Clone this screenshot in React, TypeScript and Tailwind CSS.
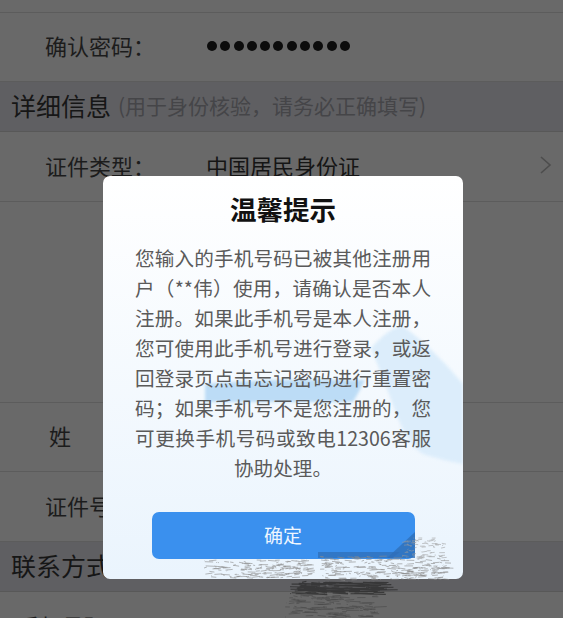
import React from 'react';

const font = { fontFamily: '"Noto Sans CJK SC", "Liberation Sans", sans-serif' };

const bodyLines = [
  '您输入的手机号码已被其他注册用',
  '户（**伟）使用，请确认是否本人',
  '注册。如果此手机号是本人注册，',
  '您可使用此手机号进行登录，或返',
  '回登录页点击忘记密码进行重置密',
  '码；如果手机号不是您注册的，您',
  '可更换手机号码或致电12306客服',
];

function Row({ label, value, height, indent = 'pl-[45px]', chevron, align = 'items-center pb-[3px]' }: { label: string; value?: React.ReactNode; height: string; indent?: string; chevron?: boolean; align?: string }) {
  return (
    <div className={`flex ${align} border-b border-[#5c5c5c] ${height} ${indent} pr-[11px]`}>
      <span className="w-[161px] shrink-0 text-[22px] text-[#1c1c1c]">{label}</span>
      <span className="flex-1 text-[22px] text-[#151515]">{value}</span>
      {chevron && (
        <svg width="13" height="20" viewBox="0 0 13 20" fill="none" stroke="#4d4d4d" strokeWidth="1.6">
          <path d="M2 2l9 8-9 8" />
        </svg>
      )}
    </div>
  );
}

function Section({ title, hint, height }: { title: string; hint?: string; height: string }) {
  return (
    <div className={`flex items-center gap-[7px] bg-[#5f5f62] border-b border-[#585858] pl-[11px] pb-[2px] ${height}`}>
      <span className="text-[25px] text-[#161616]">{title}</span>
      {hint && <span className="text-[21px] text-[#454548]">{hint}</span>}
    </div>
  );
}

// small seeded generator so the pencil marks stay the same on every render
function marks(seed: number, count: number, x: number, y: number, w: number, h: number, len: number) {
  let s = seed;
  const next = () => {
    s = (s * 16807) % 2147483647;
    return s / 2147483647;
  };
  let d = '';
  for (let i = 0; i < count; i++) {
    const px = x + next() * w;
    const py = y + next() * h;
    d += `M${px.toFixed(1)} ${py.toFixed(1)}l${(next() * len).toFixed(1)} ${((next() - 0.5) * 2).toFixed(1)}`;
  }
  return d;
}

// pencil-like scribble that runs across the bottom of the dialog
function Scribble() {
  return (
    <svg className="absolute left-[190px] top-[510px] blur-[0.6px]" width="275" height="108" viewBox="0 0 275 108" fill="none">
      <path d="M225 22v26q0 0-8 0h-20z" fill="#2f6fb8" opacity="0.8" />
      <path d="M128 42h82l-8 6h-74z" fill="#2f6fb8" opacity="0.75" />
      <path d={marks(11, 170, 14, 50, 104, 18, 9)} stroke="#8b8b8b" strokeWidth="1" opacity="0.6" />
      <path d={marks(23, 260, 130, 46, 125, 24, 9)} stroke="#8a8a8a" strokeWidth="1" opacity="0.6" />
      <path d={marks(37, 70, 212, 28, 40, 20, 6)} stroke="#9a9a9a" strokeWidth="1" opacity="0.55" />
      <path d={marks(41, 120, 100, 72, 85, 12, 26)} stroke="#262626" strokeWidth="1.1" opacity="0.7" />
      <path d={marks(53, 130, 95, 84, 90, 24, 14)} stroke="#4a4a4a" strokeWidth="1" opacity="0.6" />
    </svg>
  );
}

export default function App() {
  return (
    <div className="relative h-[618px] w-[563px] overflow-hidden bg-[#696969]" style={font}>
      <div className="h-[13px] border-b border-[#5c5c5c]" />
      <Row
        label="确认密码："
        height="h-[69px]"
        value={
          <div className="flex gap-[3.3px] pl-[1px]">
            {Array.from({ length: 11 }, (_, i) => (
              <span key={i} className="size-[10px] rounded-full bg-[#0c0c0c]" />
            ))}
          </div>
        }
      />
      <Section title="详细信息" hint="(用于身份核验，请务必正确填写)" height="h-[50px]" />
      <Row label="证件类型：" value="中国居民身份证" height="h-[70px]" chevron />
      <div className="h-[201px] border-b border-[#5c5c5c]" />
      <Row label="姓" height="h-[69px]" indent="pl-[49px]" />
      <Row label="证件号码：" height="h-[70px]" />
      <Section title="联系方式" height="h-[50px]" />
      <Row label="手机号码：" height="h-[69px]" indent="pl-[18px]" align="items-start pt-[17px]" />

      {/* dialog */}
      <div className="absolute left-[103px] top-[176px] flex h-[403px] w-[360px] flex-col overflow-hidden rounded-[7px] bg-gradient-to-b from-white to-[#eaf4fd]">
        <svg className="absolute left-0 top-0 blur-[1.5px]" width="360" height="403" viewBox="0 0 360 403">
          <path d="M268 172q20 -22 32 -22q30 22 60 58v80q-22 -4 -40 -10q-14 -8 -26 -38q-10 -28 -26 -68z" fill="#dcedfb" />
          <path d="M102 208q60 -6 160 -4q-6 12 -12 22h-148z" fill="#bcdcf6" />
        </svg>
        <div className="relative pt-[14px] text-center text-[26.5px] font-bold leading-[38px] text-[#111]">温馨提示</div>
        <div className="relative mt-[15px] px-[32px] text-[19.6px] leading-[30px] text-[#5a5a5a]">
          {bodyLines.map(line => (
            <div key={line} className="whitespace-nowrap [text-align-last:justify]">{line}</div>
          ))}
          <div className="text-center">协助处理。</div>
        </div>
        <div className="relative mt-[29px] flex h-[47px] w-[263px] items-center justify-center self-center rounded-[7px] bg-[#3a90ee] text-[19px] text-[#eef6ff]">
          确定
        </div>
      </div>
      <Scribble />
    </div>
  );
}
